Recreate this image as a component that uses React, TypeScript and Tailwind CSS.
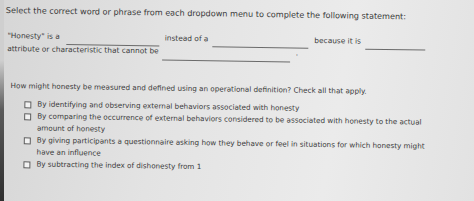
const options = [
  ["By identifying and observing external behaviors associated with honesty"],
  ["By comparing the occurrence of external behaviors considered to be associated with honesty to the actual", "amount of honesty"],
  ["By giving participants a questionnaire asking how they behave or feel in situations for which honesty might", "have an influence"],
  ["By subtracting the index of dishonesty from 1"],
];

function Blank({ w }: { w: string }) {
  return <span className={`inline-block border-b border-[#6b6b6b] ${w}`} />;
}

export default function App() {
  return (
    <div className="flex w-[474px] h-[201px] overflow-hidden bg-[linear-gradient(100deg,#d6d6d6_0%,#e3e3e3_35%,#ebebeb_70%,#e2e2e2_100%)] font-['DejaVu_Sans',sans-serif] text-[#3a3a3a]">
      <div className="w-[4px] shrink-0 bg-[linear-gradient(to_bottom,#cfcfcf_30%,#5a5a5a_55%,#2e2e2e_100%)]" />
      <div className="origin-top-left rotate-[0.9deg] pl-[2px] pt-[5px] text-[7.4px] leading-[10px]">
        <p className="text-[8.1px]">Select the correct word or phrase from each dropdown menu to complete the following statement:</p>

        <div className="mt-[16px] pl-[2px]">
          <div className="flex items-end">
            <span>"Honesty" is a</span>
            <Blank w="w-[93px] ml-[7px] mb-[-3px]" />
            <span className="ml-[5px]">instead of a</span>
            <Blank w="w-[96px] ml-[4px] mb-[-3px]" />
            <span className="ml-[6px]">because it is</span>
            <Blank w="w-[60px] ml-[5px] mb-[-3px]" />
          </div>
          <div className="flex items-end mt-[3px]">
            <span>attribute or characteristic that cannot be</span>
            <Blank w="w-[128px] ml-[4px] mb-[-4px]" />
            <span className="ml-[5px]">.</span>
          </div>
        </div>

        <p className="mt-[27px] pl-[6px] text-[7.2px]">How might honesty be measured and defined using an operational definition? Check all that apply.</p>

        <ul className="mt-[7px] pl-[20px] flex flex-col text-[7.2px] leading-[12px]">
          {options.map((lines, i) => (
            <li key={i} className="flex items-start gap-[6px]">
              <span className="mt-[2.5px] w-[7px] h-[7px] shrink-0 border border-[#5a5a5a] bg-[#f2f2f2]" />
              <span className="flex flex-col">
                {lines.map((l, j) => (
                  <span key={j}>{l}</span>
                ))}
              </span>
            </li>
          ))}
        </ul>
      </div>
    </div>
  );
}
